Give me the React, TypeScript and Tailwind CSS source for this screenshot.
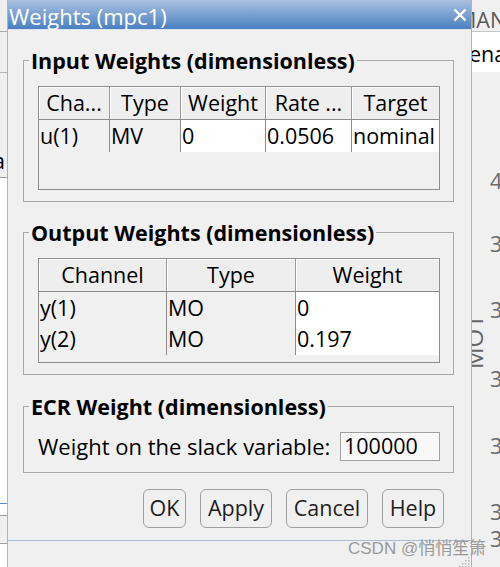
import React from 'react';

const inputHeaders = ['Cha...', 'Type', 'Weight', 'Rate ...', 'Target'];
const outputRows = [
  { ch: 'y(1)', type: 'MO', w: '0' },
  { ch: 'y(2)', type: 'MO', w: '0.197' },
];
const axisTicks = [
  { v: '4', mt: 'mt-[99px]' },
  { v: '3', mt: 'mt-[43px]' },
  { v: '3', mt: 'mt-[46px]' },
  { v: '3', mt: 'mt-[49px]' },
  { v: '3', mt: 'mt-[47px]' },
  { v: '3', mt: 'mt-[46px]' },
  { v: '3', mt: 'mt-[7px]' },
];

function Group({ title, className, children }: { title: string; className?: string; children: React.ReactNode }) {
  return (
    <fieldset className={`ml-[15px] mr-[17px] border border-[#a8a8a8] pb-[11px] pl-[14px] pr-[13px] pt-[13px] ${className ?? ''}`}>
      <legend className="-ml-[9px] px-[2px] text-[21.5px] font-bold leading-[25px] text-black">{title}</legend>
      {children}
    </fieldset>
  );
}

function HeadCell({ children, last }: { children: React.ReactNode; last?: boolean }) {
  return (
    <div
      className={`flex items-center justify-center bg-[#eeeeee] shadow-[inset_1px_1px_0_#ffffff] ${
        last ? '' : 'border-r border-[#9a9a9a]'
      }`}
    >
      {children}
    </div>
  );
}

function Cell({ children, editable, last }: { children: React.ReactNode; editable?: boolean; last?: boolean }) {
  return (
    <div
      className={`flex items-center pl-[1px] ${editable ? 'bg-white' : 'bg-[#f0f0f0]'} ${
        last ? '' : 'border-r border-[#8c8c8c]'
      }`}
    >
      {children}
    </div>
  );
}

function Grip() {
  return (
    <svg width="14" height="11" viewBox="0 0 14 11">
      {[
        [12, 1], [12, 4], [9, 4], [12, 7], [9, 7], [6, 7], [12, 10], [9, 10], [6, 10], [3, 10],
      ].map(([x, y], i) => (
        <rect key={i} x={x} y={y} width="1.5" height="1.5" fill="#b5b5b5" />
      ))}
    </svg>
  );
}

export default function App() {
  return (
    <div className="relative flex h-[567px] w-[500px] overflow-hidden bg-white font-['Open_Sans',sans-serif] text-[21.5px] text-black">
      {/* background app, left edge */}
      <div className="flex w-[7px] shrink-0 flex-col">
        <div className="h-[32px] border-b border-[#a9a9a9] bg-[#f0f0f0]" />
        <div className="h-[41px] border-b border-[#b4b4b4] bg-[#f0f0f0]" />
        <div className="flex h-[105px] items-end justify-end overflow-hidden border-b border-[#9c9c9c] bg-[#f0f0f0] pb-[6px] pr-[2px] leading-[20px]">
          <span className="whitespace-nowrap">a</span>
        </div>
        <div className="h-[326px] border-b border-[#5b8fd0] bg-white" />
        <div className="h-[12px] border-b border-[#a0a0a0] bg-white" />
        <div className="h-[28px] border-b border-[#a0a0a0] bg-[#f0f0f0]" />
        <div className="flex-1 bg-white" />
      </div>

      {/* dialog */}
      <div className="flex w-[465px] shrink-0 flex-col border-x border-[#9fb5d1] bg-[#f0f0f0]">
        <div className="flex h-[30px] items-center justify-between border-b border-[#dde5ef] bg-linear-to-b from-[#a9c1de] to-[#4a80c2] pr-[4px] text-white">
          <span className="pl-[1px] pt-[2px] text-[22px] leading-none">Weights (mpc1)</span>
          <svg width="14" height="14" viewBox="0 0 14 14">
            <path d="M1.5 1.5 L12.5 12.5 M12.5 1.5 L1.5 12.5" stroke="#ffffff" strokeWidth="2.4" />
          </svg>
        </div>

        <Group title="Input Weights (dimensionless)" className="mt-[18px]">
          <div className="flex flex-col border border-[#8f8f8f] bg-[#f0f0f0]">
            <div className="grid h-[33px] grid-cols-[71px_71px_85px_86px_1fr] border-b border-[#8c8c8c]">
              {inputHeaders.map((h, i) => (
                <HeadCell key={h} last={i === inputHeaders.length - 1}>
                  {h}
                </HeadCell>
              ))}
            </div>
            <div className="grid h-[31px] grid-cols-[71px_71px_85px_86px_1fr] border-b border-[#8c8c8c]">
              <Cell>u(1)</Cell>
              <Cell>MV</Cell>
              <Cell editable>0</Cell>
              <Cell editable>0.0506</Cell>
              <Cell editable last>
                nominal
              </Cell>
            </div>
            <div className="h-[38px]" />
          </div>
        </Group>

        <Group title="Output Weights (dimensionless)" className="mt-[18px]">
          <div className="flex flex-col border border-[#8f8f8f] bg-[#f0f0f0]">
            <div className="grid h-[33px] grid-cols-[128px_129px_1fr] border-b border-[#8c8c8c]">
              <HeadCell>Channel</HeadCell>
              <HeadCell>Type</HeadCell>
              <HeadCell last>Weight</HeadCell>
            </div>
            {outputRows.map((r) => (
              <div key={r.ch} className="grid h-[31px] grid-cols-[128px_129px_1fr] border-b border-[#8c8c8c]">
                <Cell>{r.ch}</Cell>
                <Cell>{r.type}</Cell>
                <Cell editable last>
                  {r.w}
                </Cell>
              </div>
            ))}
            <div className="h-[8px]" />
          </div>
        </Group>

        <Group title="ECR Weight (dimensionless)" className="mt-[19px]">
          <div className="flex h-[29px] items-center justify-between">
            <span className="text-[22px]">Weight on the slack variable:</span>
            <div className="flex h-[29px] w-[100px] items-center border border-[#a0a0a0] bg-[#f8f8f8] pl-[3px]">100000</div>
          </div>
        </Group>

        <div className="mt-[16px] flex justify-end gap-[14px] pr-[27px] text-[#1e1e1e]">
          <button className="h-[39px] w-[43px] rounded-[6px] border border-[#a0a0a0] bg-[#f0f0f0]">OK</button>
          <button className="h-[39px] w-[72px] rounded-[6px] border border-[#a0a0a0] bg-[#f0f0f0]">Apply</button>
          <button className="h-[39px] w-[82px] rounded-[6px] border border-[#a0a0a0] bg-[#f0f0f0]">Cancel</button>
          <button className="h-[39px] w-[62px] rounded-[6px] border border-[#a0a0a0] bg-[#f0f0f0]">Help</button>
        </div>

        <div className="mt-[12px] flex flex-1 items-end justify-end border-t border-[#a9bcd6] pr-[1px]">
          <Grip />
        </div>
      </div>

      {/* background app, right edge */}
      <div className="flex w-[28px] shrink-0 flex-col overflow-hidden">
        <div className="h-[32px] border-b border-[#c6c6c6] bg-[#f0f0f0] pt-[10px] leading-[20px] text-[#5a5a5a]">
          <span className="-ml-[15px] block whitespace-nowrap">MAN</span>
        </div>
        <div className="h-[40px] bg-white pt-[12px] leading-[20px]">
          <span className="-ml-[3px] block whitespace-nowrap">ena</span>
        </div>
        <div className="flex flex-1 bg-[#f0f0f0] text-[#6a6a6a]">
          <div className="w-[14px] shrink-0 overflow-hidden">
            <div className="-ml-[8px] mt-[243px] rotate-180 text-[24px] leading-[20px] text-[#666666] [writing-mode:vertical-rl]">
              MO1
            </div>
          </div>
          <div className="ml-[4px] flex flex-col leading-[20px]">
            {axisTicks.map((t, i) => (
              <span key={i} className={t.mt}>
                {t.v}
              </span>
            ))}
          </div>
        </div>
      </div>

      <span className="pointer-events-none absolute left-[348px] top-[537px] whitespace-nowrap font-['Liberation_Sans','Noto_Sans_CJK_SC',sans-serif] text-[17px] leading-[24px] text-[#9a9a9a]">
        CSDN @悄悄笙箫
      </span>
    </div>
  );
}
